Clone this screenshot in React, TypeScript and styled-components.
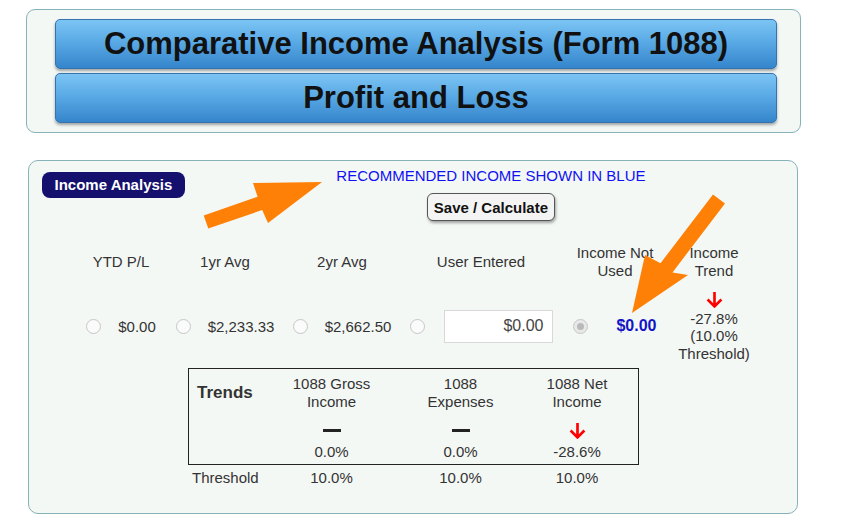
import React from "react";
import styled, { createGlobalStyle } from "styled-components";

const GlobalStyle = createGlobalStyle`
  body {
    margin: 0;
    background: #ffffff;
    font-family: "Liberation Sans", Arial, sans-serif;
    color: #333333;
  }
`;

const Page = styled.div`
  position: relative;
  width: 850px;
  height: 524px;
  box-sizing: border-box;
  padding: 9px 0 0 26px;
  overflow: hidden;
`;

const TitlePanel = styled.div`
  width: 775px;
  box-sizing: border-box;
  border: 1px solid #86b2ba;
  border-radius: 9px;
  background: #f3f8f5;
  padding: 9px 23px 9px 28px;
  display: flex;
  flex-direction: column;
  gap: 4px;
`;

const TitleBar = styled.div`
  height: 50px;
  box-sizing: border-box;
  display: flex;
  align-items: center;
  justify-content: center;
  font-size: 31px;
  font-weight: bold;
  color: #111111;
  background: linear-gradient(to bottom, #7cc4f3 0%, #5aaae6 45%, #3585cc 100%);
  border: 1px solid #3474ae;
  border-radius: 5px;
  box-shadow: 0 2px 3px rgba(0, 0, 0, 0.35);
`;

const IncomePanel = styled.section`
  margin: 27px 0 0 2px;
  width: 770px;
  height: 354px;
  box-sizing: border-box;
  border: 1px solid #86b2ba;
  border-radius: 10px;
  background: #f3f8f5;
  padding-top: 6px;
`;

const PanelHead = styled.div`
  display: flex;
  align-items: flex-start;
  padding-left: 13px;
`;

const Badge = styled.div`
  margin-top: 5px;
  height: 26px;
  line-height: 26px;
  padding: 0 12.5px;
  border-radius: 8px;
  background: #150f6e;
  color: #ffffff;
  font-size: 15px;
  font-weight: bold;
`;

const HeadCenter = styled.div`
  flex: 1;
  display: flex;
  flex-direction: column;
  align-items: center;
  gap: 8px;
`;

const Notice = styled.div`
  font-size: 15px;
  line-height: 18px;
  color: #1010f4;
`;

const SaveButton = styled.button`
  height: 28px;
  padding: 0 5.5px;
  border: 1.5px solid #555555;
  border-radius: 6px;
  background: #f4f4f4;
  box-shadow: 1px 2px 3px rgba(0, 0, 0, 0.35);
  font-family: "Liberation Sans", Arial, sans-serif;
  font-size: 15px;
  font-weight: bold;
  color: #111111;
`;

const IncomeGrid = styled.div`
  width: 684px;
  margin: 23px auto 0;
  display: grid;
  grid-template-columns: 100px 108px 126px 152px 116px 82px;
  grid-template-rows: 36px 72px;
  row-gap: 10px;
  align-items: center;
`;

const HeadCell = styled.div`
  text-align: center;
  font-size: 15px;
  line-height: 18px;
  color: #333333;
`;

const ValueCell = styled.div<{ $gap: number }>`
  display: flex;
  align-items: center;
  justify-content: center;
  gap: ${(p) => p.$gap}px;
  font-size: 15px;
  color: #333333;
`;

const Radio = styled.input`
  appearance: none;
  margin: 0;
  width: 15px;
  height: 15px;
  flex: none;
  border: 1px solid #c6c6c6;
  border-radius: 50%;
  background: #fbfbfb;
  box-sizing: border-box;
  display: grid;
  place-items: center;

  &:checked {
    background: #e8e8e8;
  }
  &:checked::after {
    content: "";
    width: 7px;
    height: 7px;
    border-radius: 50%;
    background: #b9b9b9;
  }
`;

const AmountInput = styled.input`
  width: 109px;
  height: 33px;
  box-sizing: border-box;
  border: 1px solid #d8d8d8;
  background: #ffffff;
  padding: 0 8px 0 0;
  text-align: right;
  font-family: "Liberation Sans", Arial, sans-serif;
  font-size: 16px;
  color: #444444;
  outline: none;
`;

const BlueAmount = styled.span`
  font-size: 16px;
  font-weight: bold;
  color: #1313c8;
`;

const TrendCell = styled.div`
  display: flex;
  flex-direction: column;
  align-items: center;
  font-size: 15px;
  line-height: 17.5px;
  color: #333333;
`;

const IconSlot = styled.div<{ $h: number }>`
  height: ${(p) => p.$h}px;
  display: flex;
  align-items: center;
  justify-content: center;
`;

const TrendsBox = styled.div`
  width: 449px;
  margin: 6px auto 0;
  border: 1.5px solid #222222;
  padding: 5.5px 0 3px;
`;

const TrendsRow = styled.div<{ $top?: number }>`
  display: grid;
  grid-template-columns: 70px 146px 112px 121px;
  align-items: center;
  margin-top: ${(p) => p.$top ?? 0}px;
`;

const ThresholdRow = styled(TrendsRow)`
  width: 449px;
  margin: 4px auto 0;
  line-height: 18px;
  font-size: 15px;
  color: #333333;
`;

const TrendsLabel = styled.div<{ $bold?: boolean; $pad: number }>`
  padding-left: ${(p) => p.$pad}px;
  font-size: ${(p) => (p.$bold ? 17 : 15)}px;
  font-weight: ${(p) => (p.$bold ? "bold" : "normal")};
  color: #333333;
`;

const TrendsHead = styled.div`
  text-align: center;
  font-size: 15px;
  line-height: 18px;
  color: #333333;
`;

const TrendsValue = styled.div`
  display: flex;
  flex-direction: column;
  align-items: center;
  font-size: 15px;
  line-height: 18px;
  color: #333333;
`;

const Centered = styled.div`
  text-align: center;
`;

const Dash = styled.span`
  width: 18px;
  height: 3px;
  background: #222222;
`;

const Overlay = styled.svg`
  position: absolute;
  left: 0;
  top: 0;
  pointer-events: none;
`;

function DownArrow() {
  return (
    <svg width="17" height="17" viewBox="0 0 16 16">
      <path d="M8 1 V14.5 M1.5 8 L8 14.5 L14.5 8" fill="none" stroke="#ff0000" strokeWidth="2.5" />
    </svg>
  );
}

function App() {
  return (
    <Page>
      <GlobalStyle />
      <TitlePanel>
        <TitleBar>Comparative Income Analysis (Form 1088)</TitleBar>
        <TitleBar>Profit and Loss</TitleBar>
      </TitlePanel>

      <IncomePanel>
        <PanelHead>
          <Badge>Income Analysis</Badge>
          <HeadCenter>
            <Notice>RECOMMENDED INCOME SHOWN IN BLUE</Notice>
            <SaveButton type="button">Save / Calculate</SaveButton>
          </HeadCenter>
        </PanelHead>

        <IncomeGrid>
          <HeadCell>YTD P/L</HeadCell>
          <HeadCell>1yr Avg</HeadCell>
          <HeadCell>2yr Avg</HeadCell>
          <HeadCell>User Entered</HeadCell>
          <HeadCell>
            Income Not
            <br />
            Used
          </HeadCell>
          <HeadCell>
            Income
            <br />
            Trend
          </HeadCell>

          <ValueCell $gap={17}>
            <Radio type="radio" name="income" />
            <span>$0.00</span>
          </ValueCell>
          <ValueCell $gap={17}>
            <Radio type="radio" name="income" />
            <span>$2,233.33</span>
          </ValueCell>
          <ValueCell $gap={17}>
            <Radio type="radio" name="income" />
            <span>$2,662.50</span>
          </ValueCell>
          <ValueCell $gap={19}>
            <Radio type="radio" name="income" />
            <AmountInput type="text" defaultValue="$0.00" />
          </ValueCell>
          <ValueCell $gap={28}>
            <Radio type="radio" name="income" defaultChecked disabled />
            <BlueAmount>$0.00</BlueAmount>
          </ValueCell>
          <TrendCell>
            <IconSlot $h={20}>
              <DownArrow />
            </IconSlot>
            <Centered>
              -27.8%
              <br />
              (10.0%
              <br />
              Threshold)
            </Centered>
          </TrendCell>
        </IncomeGrid>

        <TrendsBox>
          <TrendsRow>
            <TrendsLabel $bold $pad={8.5}>
              Trends
            </TrendsLabel>
            <TrendsHead>
              1088 Gross
              <br />
              Income
            </TrendsHead>
            <TrendsHead>
              1088
              <br />
              Expenses
            </TrendsHead>
            <TrendsHead>
              1088 Net
              <br />
              Income
            </TrendsHead>
          </TrendsRow>
          <TrendsRow $top={8}>
            <div />
            <TrendsValue>
              <IconSlot $h={24}>
                <Dash />
              </IconSlot>
              <span>0.0%</span>
            </TrendsValue>
            <TrendsValue>
              <IconSlot $h={24}>
                <Dash />
              </IconSlot>
              <span>0.0%</span>
            </TrendsValue>
            <TrendsValue>
              <IconSlot $h={24}>
                <DownArrow />
              </IconSlot>
              <span>-28.6%</span>
            </TrendsValue>
          </TrendsRow>
        </TrendsBox>
        <ThresholdRow>
          <TrendsLabel $pad={3.5}>Threshold</TrendsLabel>
          <Centered>10.0%</Centered>
          <Centered>10.0%</Centered>
          <Centered>10.0%</Centered>
        </ThresholdRow>
      </IncomePanel>

      <Overlay width="850" height="524" viewBox="0 0 850 524">
        <polygon
          points="203.7,215.4 257.6,196.8 253,183 322,182 268,223 262.2,210 208.3,228.6"
          fill="#fe8006"
        />
        <polygon
          points="713,194.5 660.5,263.2 645,255 632,313 688,275 672.5,272.4 725,203.5"
          fill="#fe8006"
        />
      </Overlay>
    </Page>
  );
}

export default App;
